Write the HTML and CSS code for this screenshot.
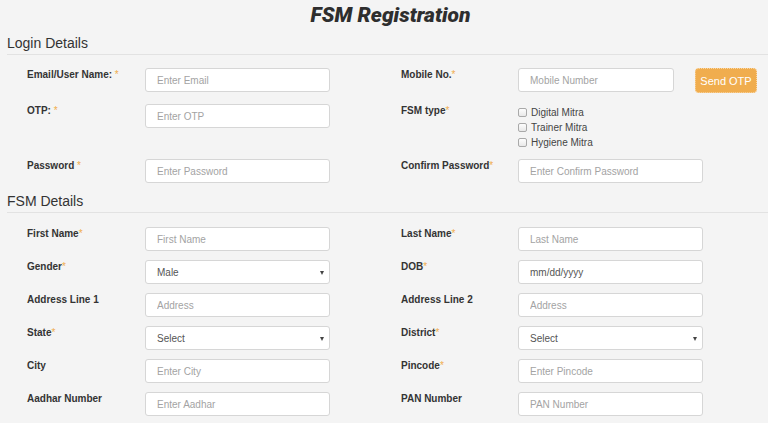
FILE: index.html
```html
<!DOCTYPE html>
<html lang="en">
<head>
<meta charset="utf-8">
<title>FSM Registration</title>
<link rel="stylesheet" href="styles.css">
</head>
<body>
<h1 class="title">FSM Registration</h1>

<h2 class="section-title">Login Details</h2>
<div class="section login">
  <div class="row">
    <div class="field left">
      <label class="label">Email/User Name: <span class="req">*</span></label>
      <input class="control" type="text" placeholder="Enter Email">
    </div>
    <div class="field right">
      <label class="label">Mobile No.<span class="req">*</span></label>
      <input class="control narrow" type="text" placeholder="Mobile Number">
      <button class="btn-otp" type="button">Send OTP</button>
    </div>
  </div>
  <div class="row">
    <div class="field left">
      <label class="label">OTP: <span class="req">*</span></label>
      <input class="control" type="text" placeholder="Enter OTP">
    </div>
    <div class="field right">
      <label class="label">FSM type<span class="req">*</span></label>
      <div class="checks">
        <label class="check"><input type="checkbox" class="box">Digital Mitra</label>
        <label class="check"><input type="checkbox" class="box">Trainer Mitra</label>
        <label class="check"><input type="checkbox" class="box">Hygiene Mitra</label>
      </div>
    </div>
  </div>
  <div class="row">
    <div class="field left">
      <label class="label">Password <span class="req">*</span></label>
      <input class="control" type="password" placeholder="Enter Password">
    </div>
    <div class="field right">
      <label class="label">Confirm Password<span class="req">*</span></label>
      <input class="control" type="password" placeholder="Enter Confirm Password">
    </div>
  </div>
</div>

<h2 class="section-title">FSM Details</h2>
<div class="section">
  <div class="row">
    <div class="field left">
      <label class="label">First Name<span class="req">*</span></label>
      <input class="control" type="text" placeholder="First Name">
    </div>
    <div class="field right">
      <label class="label">Last Name<span class="req">*</span></label>
      <input class="control" type="text" placeholder="Last Name">
    </div>
  </div>
  <div class="row">
    <div class="field left">
      <label class="label">Gender<span class="req">*</span></label>
      <div class="control select"><span>Male</span></div>
    </div>
    <div class="field right">
      <label class="label">DOB<span class="req">*</span></label>
      <div class="control value"><span>mm/dd/yyyy</span></div>
    </div>
  </div>
  <div class="row">
    <div class="field left">
      <label class="label">Address Line 1</label>
      <input class="control" type="text" placeholder="Address">
    </div>
    <div class="field right">
      <label class="label">Address Line 2</label>
      <input class="control" type="text" placeholder="Address">
    </div>
  </div>
  <div class="row">
    <div class="field left">
      <label class="label">State<span class="req">*</span></label>
      <div class="control select"><span>Select</span></div>
    </div>
    <div class="field right">
      <label class="label">District<span class="req">*</span></label>
      <div class="control select"><span>Select</span></div>
    </div>
  </div>
  <div class="row">
    <div class="field left">
      <label class="label">City</label>
      <input class="control" type="text" placeholder="Enter City">
    </div>
    <div class="field right">
      <label class="label">Pincode<span class="req">*</span></label>
      <input class="control" type="text" placeholder="Enter Pincode">
    </div>
  </div>
  <div class="row">
    <div class="field left">
      <label class="label">Aadhar Number</label>
      <input class="control" type="text" placeholder="Enter Aadhar">
    </div>
    <div class="field right">
      <label class="label">PAN Number</label>
      <input class="control" type="text" placeholder="PAN Number">
    </div>
  </div>
</div>
</body>
</html>
```

FILE: styles.css
```css
* { box-sizing: border-box; }

html, body {
  margin: 0;
  padding: 0;
  background: #f4f4f4;
  color: #333;
  font-family: "Liberation Sans", Arial, sans-serif;
  overflow: hidden;
}

.title {
  margin: 0;
  padding-left: 13px;
  text-align: center;
  font-family: Roboto, sans-serif;
  font-weight: 900;
  font-style: italic;
  font-size: 21px;
  line-height: 30px;
  color: #2e2e2e;
}

.section-title {
  margin: 5px 0 0 7px;
  padding-bottom: 3px;
  font-weight: normal;
  font-size: 14px;
  line-height: 16px;
  color: #333;
  border-bottom: 1px solid #e2e2e2;
}

.section {
  display: flex;
  flex-direction: column;
  gap: 9px;
  padding-top: 14px;
}

.section.login {
  gap: 11px;
  padding-top: 13px;
}

.section + .section-title { margin-top: 10px; }

.row {
  display: flex;
}

.field {
  display: flex;
  align-items: flex-start;
}

.field.left {
  margin-left: 27px;
  width: 374px;
}

.field.left .label { width: 118px; }
.field.right .label { width: 117px; }

.label {
  font-size: 10px;
  font-weight: bold;
  line-height: 14px;
  color: #333;
}

.req {
  color: #f0ad4e;
  font-weight: normal;
}

.control {
  width: 185px;
  height: 24px;
  margin: 0;
  padding: 0 11px;
  border: 1px solid #d6d6d6;
  border-radius: 3px;
  background: #fff;
  font-family: "Liberation Sans", Arial, sans-serif;
  font-size: 10px;
  color: #555;
  outline: none;
}

.control::placeholder { color: #a3a3a3; }

.control.narrow { width: 156px; }

.select, .value {
  display: flex;
  align-items: center;
  position: relative;
}

.select::after {
  content: "";
  position: absolute;
  right: 5px;
  top: 10px;
  border-left: 2.5px solid transparent;
  border-right: 2.5px solid transparent;
  border-top: 4px solid #444;
}

.btn-otp {
  margin-left: 21px;
  width: 62px;
  height: 25px;
  padding: 0;
  border: 1px dotted #fbd7a4;
  border-radius: 4px;
  background: #f0ad4e;
  color: #fff;
  font-family: "Liberation Sans", Arial, sans-serif;
  font-size: 11px;
}

.checks {
  display: flex;
  flex-direction: column;
  height: 44px;
  padding-top: 1px;
}

.check {
  display: flex;
  align-items: center;
  flex: none;
  height: 15px;
  font-size: 10px;
  color: #444;
}

.box {
  appearance: none;
  -webkit-appearance: none;
  width: 9px;
  height: 9px;
  margin: 0 4px 0 0;
  border: 1px solid #a9a9a9;
  border-radius: 2px;
  background: linear-gradient(#fdfdfd, #e8e8e8);
}
```
